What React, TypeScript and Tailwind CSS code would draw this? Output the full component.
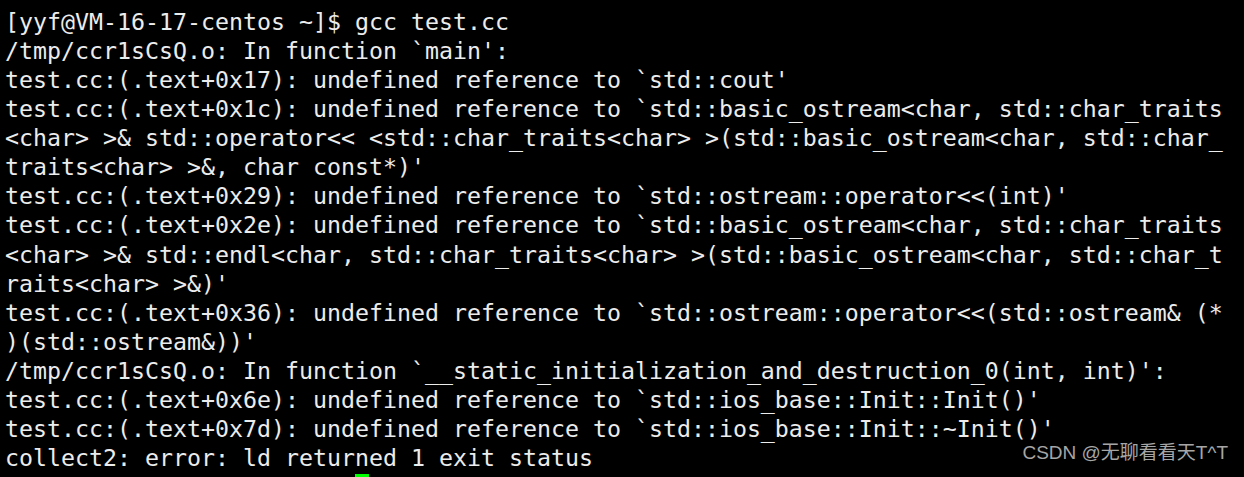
const lines = [
  "[yyf@VM-16-17-centos ~]$ gcc test.cc",
  "/tmp/ccr1sCsQ.o: In function `main':",
  "test.cc:(.text+0x17): undefined reference to `std::cout'",
  "test.cc:(.text+0x1c): undefined reference to `std::basic_ostream<char, std::char_traits",
  "<char> >& std::operator<< <std::char_traits<char> >(std::basic_ostream<char, std::char_",
  "traits<char> >&, char const*)'",
  "test.cc:(.text+0x29): undefined reference to `std::ostream::operator<<(int)'",
  "test.cc:(.text+0x2e): undefined reference to `std::basic_ostream<char, std::char_traits",
  "<char> >& std::endl<char, std::char_traits<char> >(std::basic_ostream<char, std::char_t",
  "raits<char> >&)'",
  "test.cc:(.text+0x36): undefined reference to `std::ostream::operator<<(std::ostream& (*",
  ")(std::ostream&))'",
  "/tmp/ccr1sCsQ.o: In function `__static_initialization_and_destruction_0(int, int)':",
  "test.cc:(.text+0x6e): undefined reference to `std::ios_base::Init::Init()'",
  "test.cc:(.text+0x7d): undefined reference to `std::ios_base::Init::~Init()'",
  "collect2: error: ld returned 1 exit status",
];

export default function App() {
  return (
    <div className="relative h-[477px] w-[1244px] overflow-hidden bg-black">
      {/* terminal output */}
      <div className="pl-[5px] pt-[7px] font-['DejaVu_Sans_Mono',monospace] text-[23.25px] leading-[29.07px] text-[#ececec] whitespace-pre">
        {lines.map((line, i) => (
          <div key={i}>{line}</div>
        ))}
        <div className="flex">
          <span>{" ".repeat(25)}</span>
          <span className="mt-[2px] h-[27px] w-[14px] bg-[#00ff00]" />
        </div>
      </div>

      {/* watermark */}
      <div className="absolute right-[16px] bottom-[10px] font-['Liberation_Sans','Noto_Sans_CJK_SC',sans-serif] text-[19px] text-[#a6a6a6]">
        CSDN @无聊看看天T^T
      </div>
    </div>
  );
}
